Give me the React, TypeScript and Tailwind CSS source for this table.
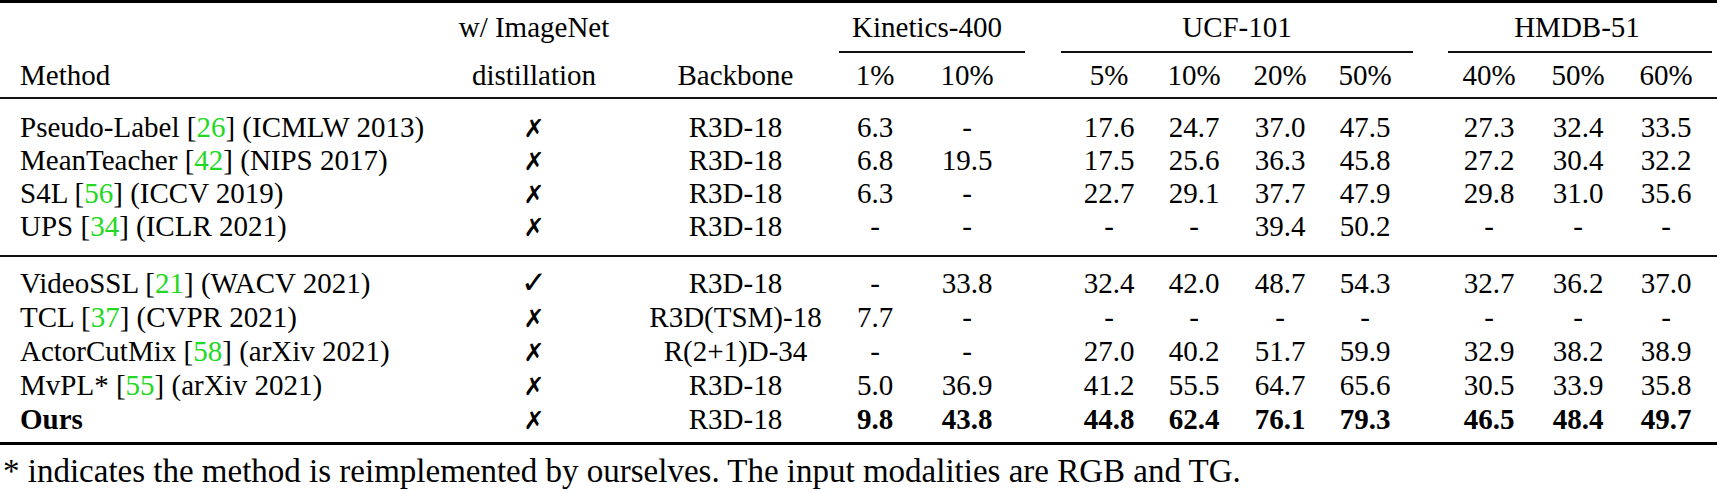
import React from "react";

const GRID =
  "grid grid-cols-[432px_204px_199px_80px_104px_48px_84px_86px_86px_84px_38px_88px_90px_86px_8px] items-center";

type Row = {
  name: string;
  cite?: string;
  venue?: string;
  mark: "x" | "v";
  backbone: string;
  vals: string[];
  bold?: boolean;
};

const group1: Row[] = [
  { name: "Pseudo-Label", cite: "26", venue: "(ICMLW 2013)", mark: "x", backbone: "R3D-18", vals: ["6.3", "-", "17.6", "24.7", "37.0", "47.5", "27.3", "32.4", "33.5"] },
  { name: "MeanTeacher", cite: "42", venue: "(NIPS 2017)", mark: "x", backbone: "R3D-18", vals: ["6.8", "19.5", "17.5", "25.6", "36.3", "45.8", "27.2", "30.4", "32.2"] },
  { name: "S4L", cite: "56", venue: "(ICCV 2019)", mark: "x", backbone: "R3D-18", vals: ["6.3", "-", "22.7", "29.1", "37.7", "47.9", "29.8", "31.0", "35.6"] },
  { name: "UPS", cite: "34", venue: "(ICLR 2021)", mark: "x", backbone: "R3D-18", vals: ["-", "-", "-", "-", "39.4", "50.2", "-", "-", "-"] },
];

const group2: Row[] = [
  { name: "VideoSSL", cite: "21", venue: "(WACV 2021)", mark: "v", backbone: "R3D-18", vals: ["-", "33.8", "32.4", "42.0", "48.7", "54.3", "32.7", "36.2", "37.0"] },
  { name: "TCL", cite: "37", venue: "(CVPR 2021)", mark: "x", backbone: "R3D(TSM)-18", vals: ["7.7", "-", "-", "-", "-", "-", "-", "-", "-"] },
  { name: "ActorCutMix", cite: "58", venue: "(arXiv 2021)", mark: "x", backbone: "R(2+1)D-34", vals: ["-", "-", "27.0", "40.2", "51.7", "59.9", "32.9", "38.2", "38.9"] },
  { name: "MvPL*", cite: "55", venue: "(arXiv 2021)", mark: "x", backbone: "R3D-18", vals: ["5.0", "36.9", "41.2", "55.5", "64.7", "65.6", "30.5", "33.9", "35.8"] },
  { name: "Ours", mark: "x", backbone: "R3D-18", vals: ["9.8", "43.8", "44.8", "62.4", "76.1", "79.3", "46.5", "48.4", "49.7"], bold: true },
];

function Mark({ kind }: { kind: "x" | "v" }) {
  return kind === "x" ? (
    <span className="font-['DejaVu_Sans',sans-serif] text-[25px] leading-none">{"\u2717"}</span>
  ) : (
    <span className="font-['DejaVu_Sans',sans-serif] text-[31px] leading-none">{"\u2713"}</span>
  );
}

function DataRow({ r, h }: { r: Row; h: string }) {
  const v = r.vals;
  const num = r.bold ? "text-center font-bold" : "text-center";
  return (
    <div className={`${GRID} ${h}`}>
      <div className="pl-[20px] whitespace-nowrap">
        {r.bold ? (
          <span className="font-bold">{r.name}</span>
        ) : (
          <>
            {r.name} [<span className="text-[#22d822]">{r.cite}</span>] {r.venue}
          </>
        )}
      </div>
      <div className="text-center">
        <Mark kind={r.mark} />
      </div>
      <div className="text-center whitespace-nowrap">{r.backbone}</div>
      <div className={num}>{v[0]}</div>
      <div className={num}>{v[1]}</div>
      <div />
      <div className={num}>{v[2]}</div>
      <div className={num}>{v[3]}</div>
      <div className={num}>{v[4]}</div>
      <div className={num}>{v[5]}</div>
      <div />
      <div className={num}>{v[6]}</div>
      <div className={num}>{v[7]}</div>
      <div className={num}>{v[8]}</div>
      <div />
    </div>
  );
}

export default function App() {
  return (
    <div className="w-[1717px] h-[492px] bg-white text-black font-['Liberation_Serif',serif] text-[29px] leading-[34px] overflow-hidden">
      <div className="h-[3px] bg-black" />
      <div className={`${GRID} h-[48px]`}>
        <div />
        <div className="text-center whitespace-nowrap">w/ ImageNet</div>
        <div />
        <div className="col-span-2 text-center">Kinetics-400</div>
        <div />
        <div className="col-span-4 text-center">UCF-101</div>
        <div />
        <div className="col-span-3 text-center">HMDB-51</div>
        <div />
      </div>
      <div className="flex h-[2px]">
        <div className="ml-[839px] w-[186px] bg-[#111]" />
        <div className="ml-[36px] w-[352px] bg-[#111]" />
        <div className="ml-[35px] w-[264px] bg-[#111]" />
      </div>
      <div className={`${GRID} h-[44px]`}>
        <div className="pl-[20px]">Method</div>
        <div className="text-center">distillation</div>
        <div className="text-center">Backbone</div>
        <div className="text-center">1%</div>
        <div className="text-center">10%</div>
        <div />
        <div className="text-center">5%</div>
        <div className="text-center">10%</div>
        <div className="text-center">20%</div>
        <div className="text-center">50%</div>
        <div />
        <div className="text-center">40%</div>
        <div className="text-center">50%</div>
        <div className="text-center">60%</div>
        <div />
      </div>
      <div className="h-[2px] bg-[#111]" />
      <div className="pt-[11px] pb-[13px]">
        {group1.map((r) => (
          <DataRow key={r.name} r={r} h="h-[33px]" />
        ))}
      </div>
      <div className="h-[2px] bg-[#111]" />
      <div className="pt-[9px] pb-[6px]">
        {group2.map((r) => (
          <DataRow key={r.name} r={r} h="h-[34px]" />
        ))}
      </div>
      <div className="h-[3px] bg-black" />
      <div className="h-[47px] flex items-center pt-[5px] pl-[3px] whitespace-nowrap text-[33px]">
        * indicates the method is reimplemented by ourselves. The input modalities are RGB and TG.
      </div>
    </div>
  );
}
